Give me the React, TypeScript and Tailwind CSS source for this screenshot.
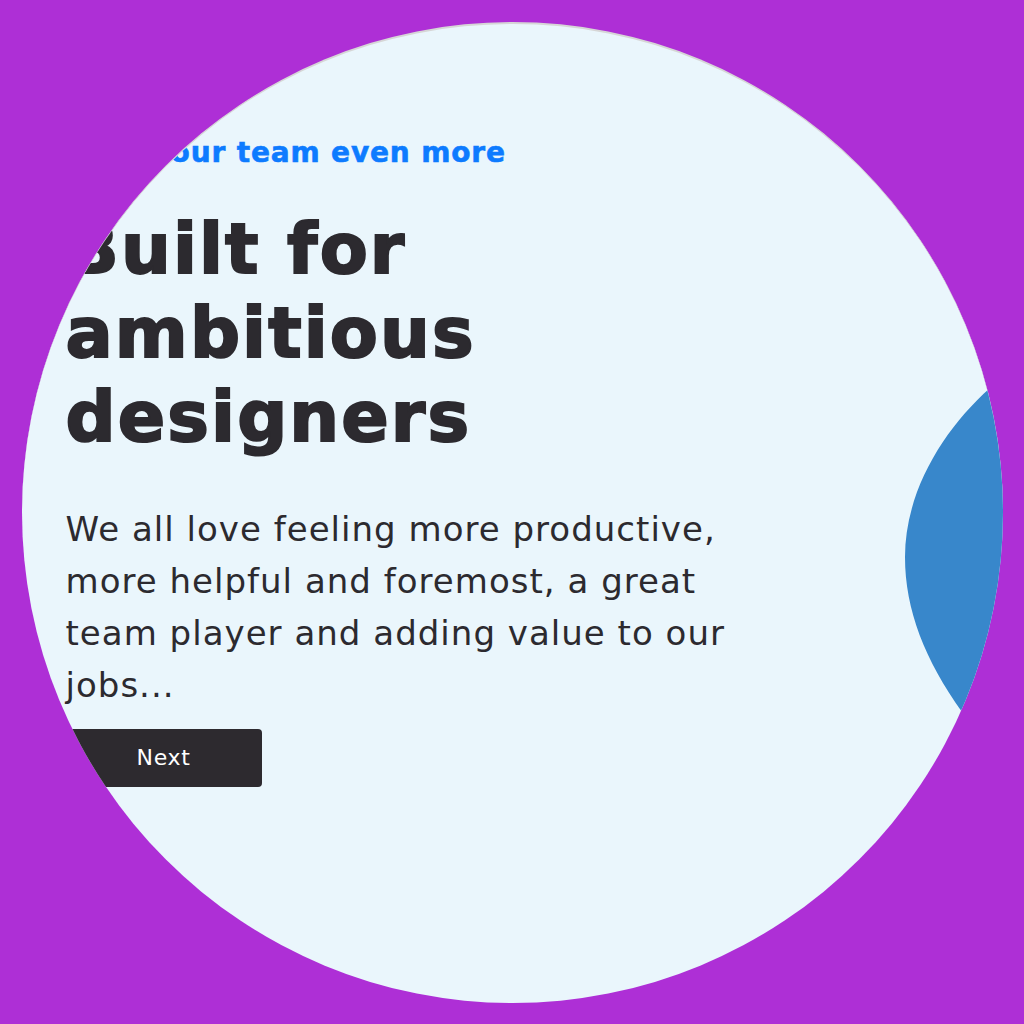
export default function App() {
  return (
    <div className="flex h-[1024px] w-[1024px] items-center justify-center bg-[#ae2fd6]">
      <div className="relative h-[981px] w-[981px] shrink-0 overflow-hidden rounded-full border-t-2 border-[#d6d6d6] bg-[#eaf6fc]">
        {/* decorative blob on the right, drawn in page coordinates */}
        <svg className="absolute left-[-22px] top-[-24px]" width="1024" height="1024" viewBox="0 0 1024 1024">
          <path
            d="M1040 320 L990 388 C945 428 905 490 905 557 C905 610 925 660 962 712 L1040 830 Z"
            fill="#3887cb"
          />
        </svg>

        <div className="relative flex flex-col pl-[44px] pt-[111px] font-['DejaVu_Sans',sans-serif] text-[#2c2a2f]">
          <p className="text-[28px] font-bold leading-[36px] tracking-[0.03em] text-[#0d7bff] [-webkit-text-stroke:0.6px_#0d7bff]">
            Help your team even more
          </p>
          <h1 className="mt-[36px] text-[70px] font-bold leading-[84px] tracking-[0.03em] [-webkit-text-stroke:2px_#2c2a2f]">
            Built for
            <br />
            ambitious
            <br />
            designers
          </h1>
          <p className="mt-[44px] text-[34px] font-normal leading-[52px] tracking-[0.03em]">
            We all love feeling more productive,
            <br />
            more helpful and foremost, a great
            <br />
            team player and adding value to our
            <br />
            jobs...
          </p>
          <button className="mt-[18px] flex h-[58px] w-[196px] items-center justify-center rounded-[4px] bg-[#2d2a2f] text-[22px] tracking-[0.03em] text-white">
            Next
          </button>
        </div>
      </div>
    </div>
  );
}
